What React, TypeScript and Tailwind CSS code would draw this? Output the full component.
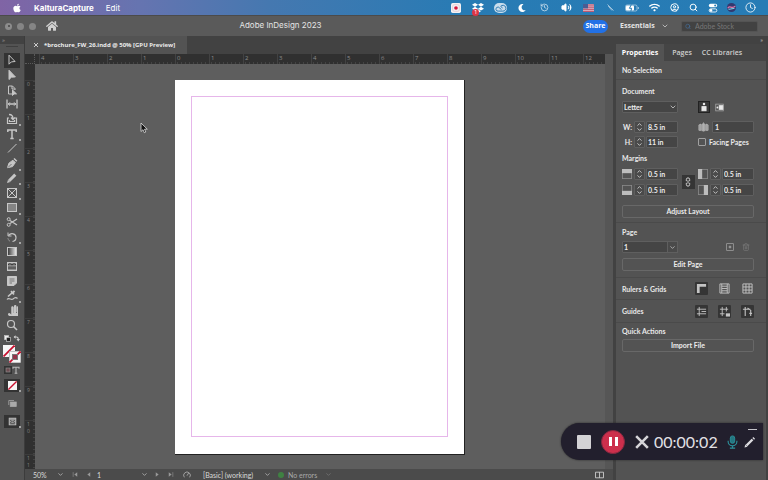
import React from 'react';
import {
  FaApple, FaDropbox, FaMoon, FaWifi, FaHome, FaHandPaper,
} from 'react-icons/fa';
import { ChevronDown, ChevronUp, History, Search, Volume2, CircleUser, Clock, Trash2 } from 'lucide-react';

const ui = "font-['Open_Sans','Noto_Sans',sans-serif]";

function Svg({ children, className = 'size-3', box = '0 0 12 12' }: { children: React.ReactNode; className?: string; box?: string }) {
  return (
    <svg viewBox={box} className={className} fill="none" stroke="currentColor" strokeWidth="1" aria-hidden="true">
      {children}
    </svg>
  );
}

const menuIcons: { name: string; icon: React.ReactNode }[] = [
  {
    name: 'Recorder',
    icon: (
      <Svg className="h-[10px] w-[10px]">
        <rect x="0" y="0" width="12" height="12" rx="2" fill="#f4f1f3" stroke="none" />
        <rect x="2" y="2" width="8" height="8" rx="2" stroke="#ddb9c2" strokeWidth=".7" />
        <circle cx="6" cy="6" r="2.2" fill="#d3153d" stroke="none" />
      </Svg>
    ),
  },
  {
    name: 'Dropbox',
    icon: (
      <span className="relative flex">
        <FaDropbox className="size-[12px]" />
        <span className="absolute bottom-[-2px] left-0 flex size-[7px] items-center justify-center rounded-full bg-[#dd3546] text-[5px] leading-[7px]">1</span>
      </span>
    ),
  },
  {
    name: 'Creative Cloud',
    icon: (
      <Svg className="h-[10px] w-[13px]" box="0 0 13 10">
        <rect x="0" y="0" width="13" height="10" rx="5" fill="#c9ddec" stroke="none" />
        <path d="M7.5 6.7 5.6 5a2 2 0 1 0-1.4 3.1h4.6A2.9 2.9 0 1 0 6.7 3.4L8.6 5" stroke="#2c79b2" strokeWidth="1" />
      </Svg>
    ),
  },
  { name: 'Do not disturb', icon: <FaMoon className="size-2" /> },
  { name: 'Time Machine', icon: <History className="size-[9px] opacity-80" /> },
  { name: 'Volume', icon: <Volume2 className="size-[11px] fill-white" /> },
  {
    name: 'Input source',
    icon: (
      <Svg className="h-[8px] w-[11px]" box="0 0 11 8">
        <rect width="11" height="8" rx="1" fill="#d9a9b9" stroke="none" />
        <path d="M0 1h11M0 3.2h11M0 5.4h11M0 7.5h11" stroke="#bd5a72" />
        <rect width="5" height="4.4" fill="#4b5c93" stroke="none" />
      </Svg>
    ),
  },
  { name: 'Bluetooth', icon: <Svg className="size-[9px] opacity-70"><path d="m2 2 8 8M3 4l5 6" /></Svg> },
  {
    name: 'Battery',
    icon: (
      <Svg className="h-[8px] w-[14px]" box="0 0 14 8">
        <rect x=".5" y="1" width="11.5" height="6" rx="1.5" strokeWidth=".8" opacity=".6" />
        <rect x="1" y="1.5" width="8" height="5" rx="1" fill="currentColor" stroke="none" />
        <path d="M6.4.5 4.4 4.3h2.2L5.8 7.5" stroke="#277cb5" />
        <path d="M13.3 3v2" opacity=".6" />
      </Svg>
    ),
  },
  { name: 'Wi-Fi', icon: <FaWifi className="size-[11px]" /> },
  { name: 'User', icon: <CircleUser className="size-[9px]" strokeWidth={2.6} /> },
  { name: 'Search', icon: <Search className="size-[9px]" strokeWidth={2.6} /> },
  {
    name: 'Control Center',
    icon: (
      <Svg className="size-[10px]">
        <rect x="1" y="1" width="10" height="4.2" rx="2.1" fill="currentColor" stroke="none" />
        <rect x="1.4" y="7" width="9.2" height="3.8" rx="1.9" />
        <circle cx="8.6" cy="3.1" r="1.2" fill="#277cb5" stroke="none" />
        <circle cx="3.6" cy="8.9" r="1.6" fill="currentColor" stroke="none" />
      </Svg>
    ),
  },
  {
    name: 'Siri',
    icon: (
      <Svg className="size-[9px]">
        <circle cx="6" cy="6" r="6" fill="#33386f" stroke="none" />
        <path d="M1 7C3 2 7 9 11 4" stroke="#e279a9" strokeWidth="1.6" />
        <path d="M2 8c3 1 5-1 8-1" stroke="#79d6ea" strokeWidth="1.4" />
      </Svg>
    ),
  },
  { name: 'Clock', icon: <Clock className="size-[11px]" strokeWidth={1.8} /> },
];

const tools: { name: string; flyout?: boolean; icon: React.ReactNode }[] = [
  { name: 'Selection', icon: <path d="M3 1.2v9l2.3-2.3 3.8-.4z" /> },
  { name: 'Direct Selection', icon: <path d="M3 1.2v9.3l2.4-2.3 4-.3z" fill="currentColor" /> },
  { name: 'Page', icon: <><path d="M6 10H2.500V2h4L9 4.500V6" /><path d="M6 2v3h3" /><path d="M6.500 6v5.500l1.500-1.600h2.500z" fill="currentColor" /></> },
  { name: 'Gap', icon: <><path d="M1 1.500v9M11 1.500v9M2 6h8" strokeWidth="1.300" /><path d="M4 4.300 2.300 6 4 7.700M8 4.300 9.700 6 8 7.700" /></> },
  { name: 'Content Collector', flyout: true, icon: <><path d="M3 5H1.500v5.500h9V5H9M3.500 7v1.500h5V7" strokeWidth="1.200" /><path d="M3 1.500c3 0 4 1.500 4 4M5 4.500 7 6.500l2-2" strokeWidth="1.300" /></> },
  { name: 'Type', flyout: true, icon: <path d="M1.800 4V2h8.400v2M6 2v8.300M4.300 10.400h3.400" strokeWidth="1.500" /> },
  { name: 'Line', icon: <path d="M2 10.500 10.500 2" /> },
  { name: 'Pen', flyout: true, icon: <><path d="m1.500 10.700 1.400-4.500 4-3 2.400 2.400-2.800 4z" fill="currentColor" /><path d="m8 1.500 2.800 2.800" strokeWidth="1.500" /><path d="m2 10.500 3.500-3.500" stroke="#535353" strokeWidth=".7" /></> },
  { name: 'Pencil', flyout: true, icon: <><path d="M3.200 8.700 9.300 2.600" strokeWidth="3" /><path d="m1 11 1-3.200L4.300 10z" fill="currentColor" stroke="none" /></> },
  { name: 'Rectangle Frame', flyout: true, icon: <><rect x="1.500" y="1.500" width="9" height="9" /><path d="m2 2 8 8M10 2l-8 8" /></> },
  { name: 'Rectangle', flyout: true, icon: <rect x="1.500" y="2.500" width="9" height="8" fill="#858585" /> },
  { name: 'Scissors', icon: <><path d="m4 4.500 7 4.500M4 7.500l7-4.500" strokeWidth="1.300" /><circle cx="2.700" cy="3.200" r="1.500" /><circle cx="2.700" cy="8.800" r="1.500" /></> },
  { name: 'Free Transform', flyout: true, icon: <><path d="M2.500 4.500C5 1.500 10 2.500 10 6.500c0 2-1.500 3.700-3.500 4" strokeWidth="1.200" /><path d="M2 1.500v3.500h3.500" /><path d="M2 7.500a4 4 0 0 0 2.500 3" strokeDasharray="1 1" /></> },
  { name: 'Gradient Swatch', icon: <><defs><linearGradient id="swatch"><stop offset="0" stopColor="#333" /><stop offset="1" stopColor="#eee" /></linearGradient></defs><rect x="1.500" y="2.500" width="9" height="8" fill="url(#swatch)" /></> },
  { name: 'Gradient Feather', icon: <><rect x="1.500" y="2.500" width="9" height="8" fill="#8d8d8d" /><path d="M2 5c1-1.500 2.500-1.500 4 0 1.500-1.500 3-1.500 4 0M3 9V6.500M5 9V6.500M7 9V6.500M9 9V6.500" stroke="#333" /></> },
  { name: 'Note', icon: <><path d="M1.500 1.500h9V8l-2.500 2.500H1.500z" fill="currentColor" /><path d="M3.500 4h5M3.500 6h5M3.500 8H6" stroke="#777" /></> },
  { name: 'Eyedropper', flyout: true, icon: <><path d="m2 7.500 4.500-4" strokeWidth="1.600" /><path d="m5 2.200 3 3.300M7 3.700l1.500-1.800" strokeWidth="1.800" /><path d="M1 10.500c2-2.500 4 1 6-.5 1.500-1.500 3-2 4.500-.5" strokeWidth="1.200" /></> },
  { name: 'Hand', icon: <FaHandPaper x="1" y="1" width="10" height="10" stroke="none" /> },
  { name: 'Zoom', icon: <><circle cx="5" cy="5" r="3.500" strokeWidth="1.200" /><path d="m7.500 7.500 3.500 3.500" strokeWidth="1.600" /></> },
];

function ToolButton({ name, flyout, active, children }: { name: string; flyout?: boolean; active?: boolean; children: React.ReactNode }) {
  return (
    <button
      aria-label={name}
      className={`relative flex min-h-0 w-4 flex-1 items-center justify-center text-[#c6c6c6] ${active ? 'bg-[#333]' : ''}`}
    >
      {children}
      {flyout && <span className="absolute -right-px bottom-0 size-[2px] bg-[#a5a5a5]" />}
    </button>
  );
}

function NoneSwatch({ className }: { className: string }) {
  return (
    <Svg className={className}>
      <rect width="12" height="12" fill="#f6f6f6" stroke="none" />
      <path d="M.5 11.500 11.500.5" stroke="#c8102e" strokeWidth="1.800" />
    </Svg>
  );
}

function Toolbar() {
  return (
    <aside aria-label="Tools" className="flex w-6 shrink-0 flex-col items-center bg-[#535353]">
      <div className="flex h-2 w-full shrink-0 items-center bg-[#424242] pl-[2px] text-[6px] text-[#999]">»</div>
      <div className="mt-[2px] h-px w-3 shrink-0 bg-[#3f3f3f]" />
      <div className="mt-[6px] flex h-[279px] shrink-0 flex-col items-center">
        {tools.map((t, i) => (
          <ToolButton key={t.name} name={t.name} flyout={t.flyout} active={i === 0}>
            <Svg className="size-[12px]">{t.icon}</Svg>
          </ToolButton>
        ))}
      </div>
      <div className="mt-[3px] flex w-4 shrink-0 items-center justify-between text-[#ccc]">
        <Svg className="size-[7px]">
          <rect x="1" y="1" width="7" height="7" fill="#eee" />
          <rect x="4" y="4" width="7" height="7" fill="#222" stroke="#ddd" />
        </Svg>
        <Svg className="size-[7px]">
          <path d="M2 3.500h4c2 0 3 1 3 4" strokeWidth="1.800" />
          <path d="M4.500.5v6L1 3.500zM6 7h6l-3 4z" fill="currentColor" stroke="none" />
        </Svg>
      </div>
      <div className="relative mt-[3px] h-[18px] w-[18px] shrink-0">
        <NoneSwatch className="absolute left-0 top-0 size-3" />
        <Svg className="absolute bottom-0 right-0 size-3">
          <rect width="12" height="12" fill="#f6f6f6" stroke="#535353" strokeWidth=".6" />
          <path d="M.5 11.500 11.500.5" stroke="#c8102e" strokeWidth="1.800" />
          <rect x="3.500" y="3.500" width="5" height="5" fill="#94344a" stroke="#777" />
        </Svg>
      </div>
      <div className="mt-[2px] flex h-[10px] w-4 shrink-0 items-center justify-between text-[#bbb]">
        <Svg className="size-[8px] bg-[#333]"><rect x="3" y="3" width="6" height="6" fill="#6d4d52" stroke="#8c8c8c" /></Svg>
        <Svg className="size-[8px]"><path d="M1.500 4V2h9v2M6 2v9M4 11h4" strokeWidth="1.600" /></Svg>
      </div>
      <div className="mt-1 flex shrink-0 flex-col gap-[5px]">
        <button aria-label="Apply None" className="relative flex h-[13px] w-4 items-center justify-center bg-[#333]">
          <NoneSwatch className="size-[9px]" />
          <span className="absolute -right-px bottom-0 size-[2px] bg-[#a5a5a5]" />
        </button>
        <button aria-label="View options" className="flex h-[13px] w-4 items-center justify-center text-[#aaa]">
          <Svg className="size-[9px]"><rect x="3" y="4" width="8" height="6" fill="currentColor" /><path d="M1 8V2h7" /></Svg>
        </button>
        <button aria-label="Screen mode" className="relative flex h-[13px] w-4 items-center justify-center bg-[#333] text-[#c6c6c6]">
          <Svg className="size-[9px]"><rect x="1.500" y="1.500" width="9" height="9" fill="#999" /><path d="m3 4 2 2-2 2M9 4 7 6l2 2M3 9h6" stroke="#333" /></Svg>
          <span className="absolute -right-px bottom-0 size-[2px] bg-[#a5a5a5]" />
        </button>
      </div>
    </aside>
  );
}

function Workspace() {
  const across = ['4', '3', '2', '1', '0', '1', '2', '3', '4', '5', '6', '7', '8', '9', '10', '11', '12'];
  const down = ['0', '1', '2', '3', '4', '5', '6', '7', '8', '9', '10', '11'];
  return (
    <div className="flex min-h-0 flex-1">
      <div className="flex min-w-0 flex-1 flex-col">
        <div className="flex h-[10px] shrink-0 bg-[#303030]">
          <div className="w-[10px] shrink-0 border-b border-r border-dotted border-[#5a5a5a]" />
          <div className="flex min-w-0 flex-1 overflow-hidden pl-1">
            {across.map((n, i) => (
              <div key={i} className="flex w-[34px] shrink-0 flex-col justify-between border-l border-[#424242] pl-px text-[6px] leading-[8px] text-[#8c8c8c]">
                {n}
                <div className="h-[2px] bg-[repeating-linear-gradient(90deg,#444_0_1px,transparent_1px_4px)]" />
              </div>
            ))}
          </div>
        </div>
        <div className="flex min-h-0 flex-1">
          <div className="w-[10px] shrink-0 overflow-hidden bg-[#303030] pt-4">
            {down.map((n) => (
              <div key={n} className="flex h-[34px] justify-between border-t border-[#3c3c3c] pl-[2px] text-[5px] leading-[7px] text-[#858585]">
                <div className="flex flex-col">{n.split('').map((d, i) => <span key={i}>{d}</span>)}</div>
                <div className="w-[2px] bg-[repeating-linear-gradient(180deg,#444_0_1px,transparent_1px_4px)]" />
              </div>
            ))}
          </div>
          <main className="relative min-w-0 flex-1 overflow-hidden bg-[#5e5e5e] pl-[140px] pt-4">
            <div className="h-[375px] w-[290px] border-b border-r border-[#222] bg-white px-4 pb-[17px] pt-4">
              <div className="h-full border border-[#e6b6ea]" />
            </div>
            <svg viewBox="0 0 8 12" className="absolute left-[105px] top-[58px] h-[12px] w-[8px]" aria-hidden="true">
              <path d="M1 1v8.500l2-1.800 1.300 3 1.500-.7-1.300-2.800h2.800z" fill="#111" stroke="#ddd" strokeWidth=".8" />
            </svg>
          </main>
        </div>
      </div>
      <div className="w-2 shrink-0 bg-[#565656]" />
    </div>
  );
}

function Arrow({ last, flip }: { last?: boolean; flip?: boolean }) {
  return (
    <Svg className={`size-[7px] text-[#999] ${flip ? '-scale-x-100' : ''}`}>
      <path d="M3 2v8l5-4z" fill="currentColor" stroke="none" />
      {last && <path d="M10 2v8" />}
    </Svg>
  );
}

function StatusBar() {
  return (
    <footer className="flex h-[11px] shrink-0 items-center bg-[#4b4b4b] pl-2 pr-[9px] font-['Lato',sans-serif] text-[7px] leading-[10px] text-[#dadada]">
      <button className="flex w-[31px] items-center justify-between">50% <ChevronDown className="size-[7px]" /></button>
      <button aria-label="First page" className="ml-2 w-[13px]"><Arrow last flip /></button>
      <button aria-label="Previous page" className="w-3"><Arrow flip /></button>
      <button className="flex w-[51px] items-center justify-between">1 <ChevronDown className="size-[7px]" /></button>
      <button aria-label="Next page" className="ml-[6px] w-[13px]"><Arrow /></button>
      <button aria-label="Last page" className="w-4"><Arrow last /></button>
      <Svg className="size-[8px] text-[#aaa]"><path d="M2 9.500A5 5 0 1 1 10 9.500M6 7l2.500-4" strokeWidth="1.300" /></Svg>
      <button className="ml-3 flex w-[68px] items-center justify-between whitespace-nowrap">[Basic] (working) <ChevronDown className="size-[7px]" /></button>
      <span className="ml-[7px] size-[6px] rounded-full bg-[#3f8142]" />
      <button className="ml-1 flex w-[44px] items-center justify-between whitespace-nowrap text-[#a9a9a9]">No errors <ChevronDown className="size-[7px] opacity-60" /></button>
      <button aria-label="Split layout view" className="ml-auto"><Svg className="h-[8px] w-[9px]" box="0 0 11 10"><path d="M.5 1.500h10v7H.5zM5.500 1.500v7" /></Svg></button>
    </footer>
  );
}

const field = 'h-3 min-w-0 rounded-[1px] border border-[#5f5f5f] bg-[#454545] text-[7px] leading-[10px] text-[#ececec] outline-none';

function Stepper({ label }: { label: string }) {
  return (
    <div className="flex h-3 w-[11px] shrink-0 flex-col items-center justify-center rounded-[1px] border border-[#5f5f5f] bg-[#4a4a4a] text-[#d0d0d0]">
      <button aria-label={`Increase ${label}`} className="h-[5px]"><ChevronUp className="-mt-px size-[7px]" strokeWidth={3} /></button>
      <button aria-label={`Decrease ${label}`} className="h-[5px]"><ChevronDown className="-mt-px size-[7px]" strokeWidth={3} /></button>
    </div>
  );
}

function Measure({ id, label, value, mark }: { id: string; label: string; value: string; mark: React.ReactNode }) {
  return (
    <div className="flex h-3 w-14 items-center">
      <label htmlFor={id} aria-label={label} className="flex w-3 shrink-0 items-center justify-start">{mark}</label>
      <Stepper label={label} />
      <input id={id} defaultValue={value} className={`${field} ml-px w-8 pl-px`} />
    </div>
  );
}

function MarginMark({ side }: { side: 'top' | 'bottom' | 'left' | 'right' }) {
  const bar = { top: [0, 0, 12, 5], bottom: [0, 7, 12, 5], left: [0, 0, 5, 12], right: [7, 0, 5, 12] }[side];
  return (
    <Svg className="size-[10px] text-[#bdbdbd]">
      <rect x=".5" y=".5" width="11" height="11" stroke="#898989" />
      <rect x={bar[0]} y={bar[1]} width={bar[2]} height={bar[3]} fill="currentColor" stroke="none" />
    </Svg>
  );
}

function IconToggle({ name, active, children }: { name: string; active?: boolean; children: React.ReactNode }) {
  return (
    <button aria-label={name} className={`flex size-[13px] items-center justify-center rounded-[1px] text-[#c4c4c4] ${active ? 'bg-[#353535]' : ''}`}>
      <Svg className="size-[11px]">{children}</Svg>
    </button>
  );
}

const wide = 'h-[13px] w-full rounded-[2px] border border-[#686868] text-center text-[7px] font-bold leading-[11px] text-[#ececec]';
const grid = <path d="M1 1h10v10H1zM4.300 1v10M7.700 1v10M1 4.300h10M1 7.700h10" />;

function PropertiesPanel() {
  return (
    <aside className="flex w-[155px] shrink-0 flex-col border-l-[3px] border-r-2 border-[#424242] bg-[#535353] font-['Lato',sans-serif] text-[7px] font-bold leading-[10px] text-[#e9e9e9]">
      <div className="flex h-2 items-center justify-end bg-[#424242] pr-[3px] text-[6px] text-[#aaa]">»</div>
      <div role="tablist" className="flex h-[17px] items-stretch bg-[#454545] font-['Open_Sans',sans-serif] font-semibold">
        <button role="tab" aria-selected="true" className="w-12 bg-[#535353] font-bold text-white">Properties</button>
        <button role="tab" aria-selected="false" className="ml-[7px] w-[22px] text-[#cfcfcf]">Pages</button>
        <button role="tab" aria-selected="false" className="ml-2 w-[42px] whitespace-nowrap text-[#cfcfcf]">CC Libraries</button>
      </div>
      <div className="flex h-[19px] items-center border-b border-[#4a4a4a] px-[6px]">No Selection</div>
      <section className="border-b border-[#4a4a4a] pb-1 pl-[6px] pr-3">
        <h2 className="flex h-[21px] items-center">Document</h2>
        <div className="flex items-center justify-between">
          <div className="relative flex">
            <select aria-label="Page size" className={`${field} w-14 appearance-none pl-px font-bold`}><option>Letter</option></select>
            <ChevronDown className="pointer-events-none absolute right-px top-[2px] size-2" />
          </div>
          <div className="flex w-14 gap-[3px]">
            <button aria-label="Portrait" className="flex size-3 items-center justify-center border border-[#222] bg-[#3a3a3a]"><Svg className="size-[10px]"><rect x="3.500" y="5.500" width="5" height="5" fill="currentColor" /><circle cx="6" cy="2.500" r="1.500" fill="currentColor" stroke="none" /></Svg></button>
            <button aria-label="Landscape" className="flex size-3 items-center justify-center"><Svg className="size-[9px]"><rect x="1" y="1.500" width="10" height="9" stroke="#aaa" /><rect x="5.500" y="3.500" width="5" height="5" fill="currentColor" /><circle cx="3.200" cy="6" r="1.200" fill="currentColor" stroke="none" /></Svg></button>
          </div>
        </div>
        <div className="mt-2 flex justify-between">
          <Measure id="w" label="Width" value="8.5 in" mark={<span className="w-full pr-[2px] text-right">W:</span>} />
          <div className="flex w-14 items-center justify-between">
            <label htmlFor="count" aria-label="Number of pages"><Svg className="h-[10px] w-[11px] text-[#b5b5b5]"><path d="M.5 3.500 3 2.500V10H.5zM11.500 3.500 9 2.500V10h2.500zM6 .5V11.500M5.500 2 4 3v7.500h1.500zM6.500 2 8 3v7.500H6.500z" fill="#999" /></Svg></label>
            <input id="count" defaultValue="1" className={`${field} w-[42px] pl-[2px]`} />
          </div>
        </div>
        <div className="mt-[3px] flex justify-between">
          <Measure id="h" label="Height" value="11 in" mark={<span className="w-full pr-[2px] text-right">H:</span>} />
          <label className="flex w-14 items-center gap-[3px] whitespace-nowrap">
            <input type="checkbox" className="size-2 shrink-0 appearance-none rounded-[1px] border border-[#a0a0a0]" />Facing Pages
          </label>
        </div>
        <h2 className="flex h-[20px] items-center">Margins</h2>
        <div className="flex items-center justify-between">
          <div className="flex flex-col gap-1">
            <Measure id="mt" label="Top margin" value="0.5 in" mark={<MarginMark side="top" />} />
            <Measure id="mb" label="Bottom margin" value="0.5 in" mark={<MarginMark side="bottom" />} />
          </div>
          <button aria-label="Link margins" className="flex h-[14px] w-[13px] items-center justify-center bg-[#353535]">
            <Svg className="size-[10px]"><path d="M4 5V3a2 2 0 0 1 4 0v2M4 7v2a2 2 0 0 0 4 0V7M6 4v4" /></Svg>
          </button>
          <div className="flex flex-col gap-1">
            <Measure id="ml" label="Left margin" value="0.5 in" mark={<MarginMark side="left" />} />
            <Measure id="mr" label="Right margin" value="0.5 in" mark={<MarginMark side="right" />} />
          </div>
        </div>
        <button className={`${wide} mt-[9px]`}>Adjust Layout</button>
      </section>
      <section className="border-b border-[#4a4a4a] pb-[6px] pl-[6px] pr-3">
        <h2 className="flex h-[18px] items-center">Page</h2>
        <div className="flex items-center">
          <div className="relative flex">
            <select aria-label="Current page" className={`${field} w-14 appearance-none pl-px font-bold`}><option>1</option></select>
            <span className="pointer-events-none absolute right-0 top-0 flex h-3 w-[11px] items-center justify-center border border-[#5f5f5f] bg-[#4a4a4a]"><ChevronDown className="size-[7px]" /></span>
          </div>
          <button aria-label="New page" className="ml-auto text-[#aaa]"><Svg className="size-2"><rect x="1" y="1" width="10" height="10" /><path d="M6 4v4M4 6h4" strokeWidth="1.500" /></Svg></button>
          <button aria-label="Delete page" className="ml-2 mr-1 text-[#7d7d7d]"><Trash2 className="size-2" /></button>
        </div>
        <button className={`${wide} mt-[5px]`}>Edit Page</button>
      </section>
      <section className="flex h-[22px] items-center border-b border-[#4a4a4a] pl-[6px] pr-3">
        <h2 className="mr-auto whitespace-nowrap">Rulers &amp; Grids</h2>
        <div className="flex gap-[10px]">
          <IconToggle name="Rulers" active><path d="M2.500 11V2.500H11" strokeWidth="3" /></IconToggle>
          <IconToggle name="Baseline grid"><path d="M1 1h10v10H1zM3 1v10M9 1v10M3 3.500h6M3 6h6M3 8.500h6" /></IconToggle>
          <IconToggle name="Document grid">{grid}</IconToggle>
        </div>
      </section>
      <section className="flex h-[23px] items-center border-b border-[#4a4a4a] pl-[6px] pr-3">
        <h2 className="mr-auto">Guides</h2>
        <div className="flex gap-[10px]">
          <IconToggle name="Show guides" active><path d="M1 3.500h10M1 8.500h10M3.500 1v10M6 6h5" /></IconToggle>
          <IconToggle name="Lock guides" active><path d="M1 3.500h9M1 8.500h5M3.500 1v10M8 1v5" /><rect x="7.500" y="8" width="4.500" height="3.500" fill="currentColor" stroke="none" /></IconToggle>
          <IconToggle name="Smart guides" active><path d="M1 3.500h8M3.500 1v10M6 2l4 3M9.500 5v6M8 8h3" strokeWidth="1.200" /></IconToggle>
        </div>
      </section>
      <section className="pl-[6px] pr-3">
        <h2 className="flex h-[16px] items-center">Quick Actions</h2>
        <button className={wide}>Import File</button>
      </section>
    </aside>
  );
}

function Recorder() {
  return (
    <div role="toolbar" aria-label="Screen recorder" className="absolute bottom-5 right-[5px] flex h-[37px] w-[202px] items-center rounded-l-full rounded-r-[2px] bg-[#221f2d] pl-4 pr-[6px] shadow-[0_0_2px_#222]">
      <button aria-label="Stop" className="size-[14px] rounded-[1px] bg-[#d3d2d5]" />
      <button aria-label="Pause" className="ml-[10px] flex size-6 items-center justify-center gap-[3px] rounded-full border border-[#842840] bg-[#cc2f4c]">
        <span className="h-[9px] w-[3px] bg-white" />
        <span className="h-[9px] w-[3px] bg-white" />
      </button>
      <button aria-label="Cancel" className="ml-[10px] text-[#d6d5d9]"><Svg className="size-[14px]"><path d="m1 1 10 10M11 1 1 11" strokeWidth="2.200" /></Svg></button>
      <time className="ml-[5px] font-['Lato',sans-serif] text-[16px] leading-5 text-[#e2e1e5]">00:00:02</time>
      <button aria-label="Microphone" className="ml-auto text-[#2c929d]">
        <svg viewBox="0 0 12 16" className="h-[14px] w-[11px]" fill="none" stroke="currentColor" aria-hidden="true">
          <rect x="3.500" y="1" width="5" height="8.500" rx="2.500" fill="#247781" /><path d="M1 6.500v1a5 5 0 0 0 10 0v-1M6 12.500V15M3 15h6" strokeWidth="1.300" />
        </svg>
      </button>
      <div className="ml-[6px] flex h-full flex-col items-end justify-between pb-3 pt-[6px] text-[#dddce0]">
        <button aria-label="Minimize" className="h-px w-[9px] bg-[#c4c3c8]" />
        <button aria-label="Annotate"><Svg className="mr-px size-[12px]"><path d="m2.500 9.500 6-6" strokeWidth="2.400" /><path d="m9.200 2.800 1-1" strokeWidth="2.400" /><path d="m.5 11.500.8-3L3.500 10.700z" fill="currentColor" stroke="none" /></Svg></button>
      </div>
    </div>
  );
}

export default function App() {
  return (
    <div className={`relative flex h-screen flex-col overflow-hidden bg-[#424242] ${ui}`}>
      <nav className="flex h-[15px] shrink-0 items-center bg-[linear-gradient(90deg,#8064a5_0%,#6674b0_18%,#4578b0_35%,#287bb4_60%,#277cb5_100%)] pr-2 font-['Inter',sans-serif] text-[8px] leading-3 text-white">
        <button aria-label="Apple menu" className="ml-3"><FaApple className="size-[10px]" /></button>
        <button className="ml-3 font-bold">KalturaCapture</button>
        <button className="ml-3">Edit</button>
        <div className="ml-auto flex">
          {menuIcons.map((m, i) => (
            <button key={m.name} aria-label={m.name} className={`flex items-center justify-center ${i < 10 ? 'w-[22px]' : 'w-[19px]'}`}>{m.icon}</button>
          ))}
        </div>
      </nav>
      <header className="flex h-[21px] shrink-0 items-center border-t border-[#4b4b4b] bg-[#5a5a5a] pr-[10px] text-[#e4e4e4]">
        <div className="ml-[5px] flex gap-[5px]">
          <button aria-label="Close window" className="flex size-[7px] items-center justify-center rounded-full bg-[#8c8c8c]"><span className="size-[2px] rounded-full bg-[#444]" /></button>
          <button aria-label="Minimize window" className="size-[7px] rounded-full bg-[#858585]" />
          <button aria-label="Zoom window" className="size-[7px] rounded-full bg-[#858585]" />
        </div>
        <button aria-label="Home" className="ml-[10px]"><FaHome className="size-[12px] text-[#d0d0d0]" /></button>
        <h1 className="flex-1 pb-[2px] pr-[80px] text-center font-['Inter',sans-serif] text-[8px] leading-[10px]">Adobe InDesign 2023</h1>
        <button className="h-[13px] w-[25px] rounded-full bg-[#2271e6] text-[7px] font-bold leading-[12px] text-white">Share</button>
        <button className="ml-3 flex w-[49px] items-center justify-between text-[7px] font-bold leading-[10px]">Essentials <ChevronDown className="size-2" /></button>
        <label className="ml-3 flex h-[11px] w-[77px] items-center gap-1 rounded-[2px] border border-[#545454] bg-[#424242] pl-[3px]">
          <Search className="size-[7px] text-[#477bb3]" />
          <input aria-label="Search Adobe Stock" placeholder="Adobe Stock" className="w-full min-w-0 bg-transparent font-['Lato',sans-serif] text-[7px] leading-[9px] outline-none placeholder:text-[#777]" />
        </label>
      </header>
      <div className="flex min-h-0 flex-1">
        <Toolbar />
        <div className="flex min-w-0 flex-1 flex-col border-l border-[#3c3c3c]">
          <div role="tablist" className="flex h-[18px] shrink-0 items-stretch bg-[#424242]">
            <div role="tab" aria-selected="true" className="flex w-[162px] items-center gap-[5px] whitespace-nowrap bg-[#535353] pl-2 text-[6px] font-bold leading-[10px] text-[#ececec]">
              <button aria-label="Close document"><Svg className="size-[6px]"><path d="m2 2 8 8M10 2l-8 8" strokeWidth="1.600" /></Svg></button>
              *brochure_FW_26.indd @ 50% [GPU Preview]
            </div>
          </div>
          <Workspace />
          <StatusBar />
        </div>
        <PropertiesPanel />
      </div>
      <Recorder />
    </div>
  );
}
